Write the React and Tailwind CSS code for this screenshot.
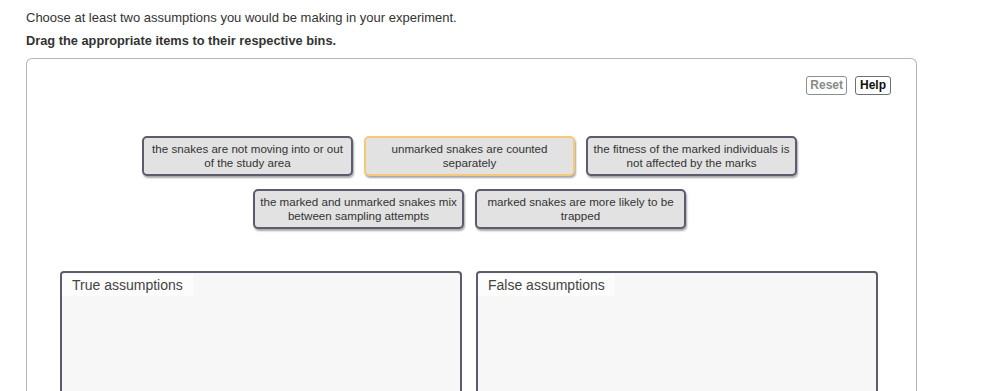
const font = { fontFamily: '"Liberation Sans", Arial, sans-serif' };

const rowOne = [
  { text: "the snakes are not moving into or out of the study area" },
  { text: "unmarked snakes are counted separately", active: true },
  { text: "the fitness of the marked individuals is not affected by the marks" },
];

const rowTwo = [
  { text: "the marked and unmarked snakes mix between sampling attempts" },
  { text: "marked snakes are more likely to be trapped" },
];

function Item({ text, active }) {
  return (
    <div
      className={
        "h-[40px] w-[211px] rounded-[5px] border-2 bg-[#e2e2e2] px-1 pt-[4px] text-center text-[11.6px] leading-[14px] text-[#333] shadow-[1px_2px_2px_rgba(0,0,0,0.35)] " +
        (active ? "border-[#f7c878]" : "border-[#5b5c6e]")
      }
    >
      {text}
    </div>
  );
}

function Bin({ label }) {
  return (
    <div className="h-[140px] w-[402px] rounded-[4px] border-2 border-[#5b5c6e] bg-[#f7f7f7]">
      <div className="inline-block bg-[#fcfcfc] pl-[10px] pr-[10px] pt-[3px] pb-[3px] text-[14px] leading-[16px] text-[#444]">
        {label}
      </div>
    </div>
  );
}

export default function App() {
  return (
    <div className="h-[391px] overflow-hidden bg-white pl-[26px]" style={font}>
      <p className="pt-[10px] text-[13px] leading-[15px] text-[#333]">
        Choose at least two assumptions you would be making in your experiment.
      </p>
      <p className="mt-[8px] text-[12.8px] font-bold leading-[15px] text-[#333]">
        Drag the appropriate items to their respective bins.
      </p>

      <section className="mt-[10px] h-[360px] w-[891px] rounded-t-[6px] border border-b-0 border-[#b5b5b5]">
        <div className="flex justify-end gap-[8px] pr-[25px] pt-[17px]">
          <button className="h-[19px] rounded-[3px] border border-[#8a8f94] px-[3px] text-[12px] font-bold leading-[17px] text-[#8a8a8a]">
            Reset
          </button>
          <button className="h-[19px] rounded-[3px] border border-[#6b7075] px-[4px] text-[12px] font-bold leading-[17px] text-[#111]">
            Help
          </button>
        </div>

        <div className="mt-[41px] flex flex-col items-center gap-[13px] pr-[4px]">
          <div className="flex gap-[11px]">
            {rowOne.map((item) => (
              <Item key={item.text} {...item} />
            ))}
          </div>
          <div className="flex gap-[11px]">
            {rowTwo.map((item) => (
              <Item key={item.text} {...item} />
            ))}
          </div>
        </div>

        <div className="mt-[42px] flex gap-[14px] pl-[33px]">
          <Bin label="True assumptions" />
          <Bin label="False assumptions" />
        </div>
      </section>
    </div>
  );
}
